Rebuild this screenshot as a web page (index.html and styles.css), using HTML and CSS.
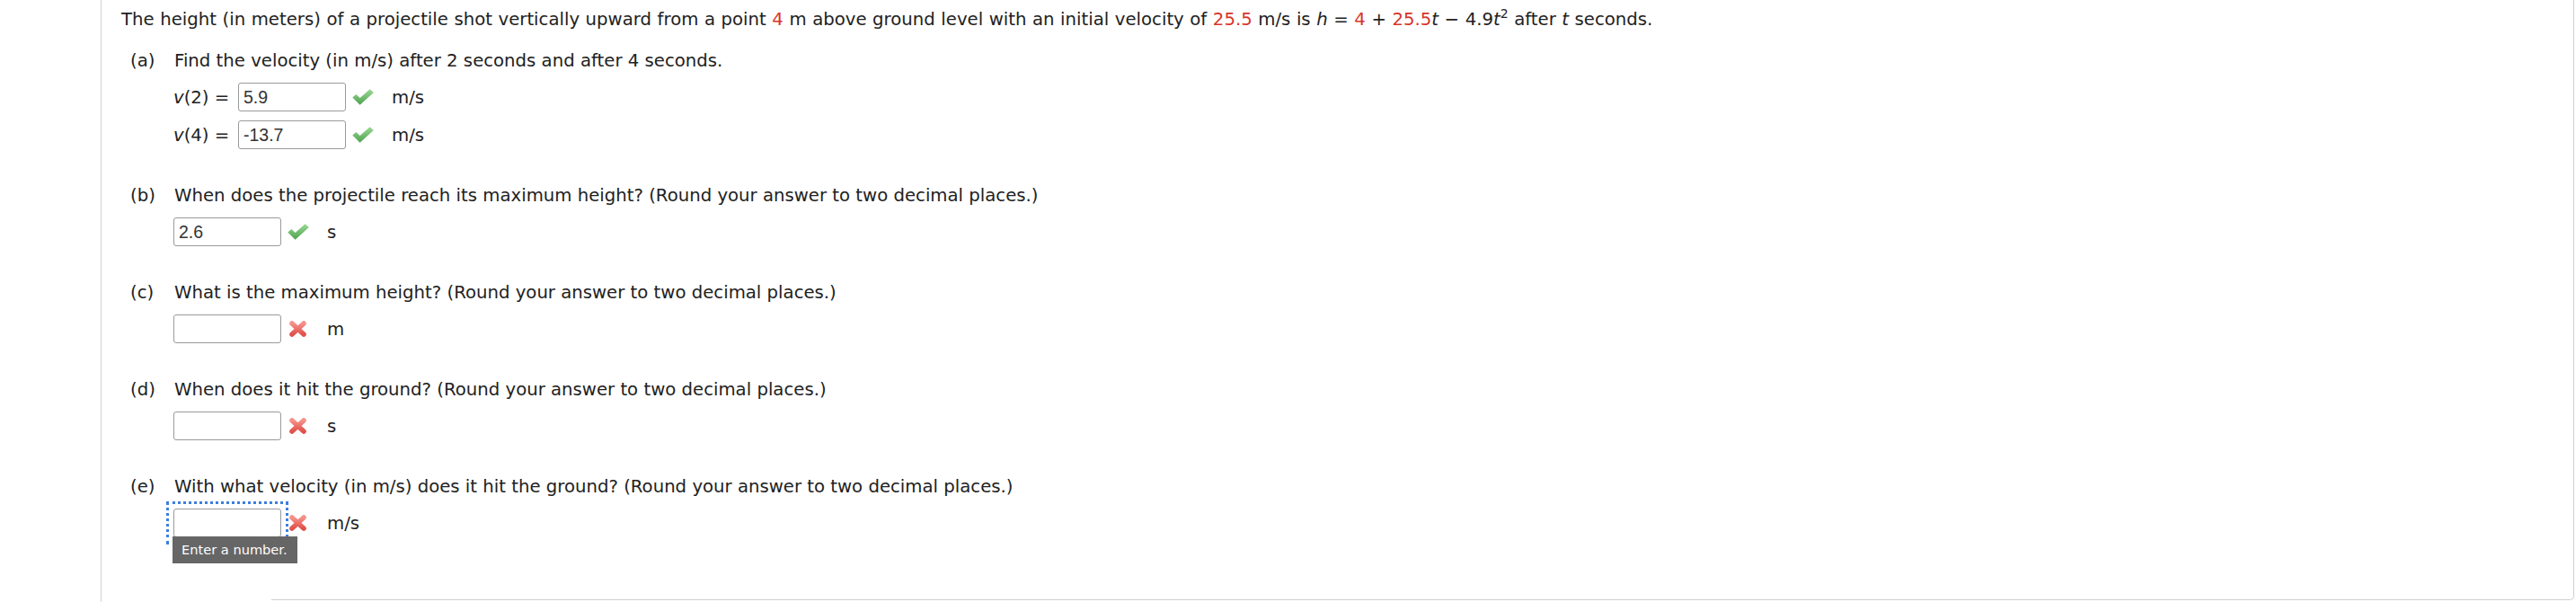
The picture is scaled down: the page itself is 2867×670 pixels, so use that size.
FILE: index.html
```html
<!DOCTYPE html>
<html lang="en">
<head>
<meta charset="utf-8">
<title>Projectile question</title>
<link rel="stylesheet" href="styles.css">
</head>
<body>
<div class="page">
  <div class="gutter"></div>
  <div class="panel">
    <p class="stem">The height (in meters) of a projectile shot vertically upward from a point <span class="num">4</span> m above ground level with an initial velocity of <span class="num">25.5</span> m/s is <i>h</i> = <span class="num">4</span> + <span class="num">25.5</span><i>t</i> &minus; 4.9<i>t</i><sup>2</sup> after <i>t</i> seconds.</p>

    <section class="part">
      <div class="title"><span class="letter">(a)</span><span>Find the velocity (in m/s) after 2 seconds and after 4 seconds.</span></div>
      <div class="row">
        <span class="label"><i>v</i>(2) =</span>
        <input class="ans" type="text" value="5.9">
        <span class="mark"><svg viewBox="0 0 24 18" width="24" height="18"><defs><linearGradient id="g1" x1="0" y1="0" x2="0" y2="1"><stop offset="0" stop-color="#9bd896"/><stop offset="1" stop-color="#4da34f"/></linearGradient></defs><path d="M0.3 9.6 L4.4 5.9 L8.6 9.9 L19.6 0.2 L23.8 4 L8.6 17.8 Z" fill="url(#g1)"/></svg></span>
        <span class="unit">m/s</span>
      </div>
      <div class="row">
        <span class="label"><i>v</i>(4) =</span>
        <input class="ans" type="text" value="-13.7">
        <span class="mark"><svg viewBox="0 0 24 18" width="24" height="18"><defs><linearGradient id="g2" x1="0" y1="0" x2="0" y2="1"><stop offset="0" stop-color="#9bd896"/><stop offset="1" stop-color="#4da34f"/></linearGradient></defs><path d="M0.3 9.6 L4.4 5.9 L8.6 9.9 L19.6 0.2 L23.8 4 L8.6 17.8 Z" fill="url(#g2)"/></svg></span>
        <span class="unit">m/s</span>
      </div>
    </section>

    <section class="part">
      <div class="title"><span class="letter">(b)</span><span>When does the projectile reach its maximum height? (Round your answer to two decimal places.)</span></div>
      <div class="row">
        <input class="ans" type="text" value="2.6">
        <span class="mark"><svg viewBox="0 0 24 18" width="24" height="18"><defs><linearGradient id="g3" x1="0" y1="0" x2="0" y2="1"><stop offset="0" stop-color="#9bd896"/><stop offset="1" stop-color="#4da34f"/></linearGradient></defs><path d="M0.3 9.6 L4.4 5.9 L8.6 9.9 L19.6 0.2 L23.8 4 L8.6 17.8 Z" fill="url(#g3)"/></svg></span>
        <span class="unit">s</span>
      </div>
    </section>

    <section class="part">
      <div class="title"><span class="letter">(c)</span><span>What is the maximum height? (Round your answer to two decimal places.)</span></div>
      <div class="row">
        <input class="ans" type="text" value="">
        <span class="mark"><svg viewBox="0 0 22 20" width="22" height="20"><defs><linearGradient id="r1" x1="0" y1="0" x2="0" y2="1"><stop offset="0" stop-color="#f5928b"/><stop offset="1" stop-color="#e0514b"/></linearGradient></defs><path d="M4 4 L17 16 M17 4 L4 16" stroke="url(#r1)" stroke-width="5.6" stroke-linecap="round" fill="none"/></svg></span>
        <span class="unit">m</span>
      </div>
    </section>

    <section class="part">
      <div class="title"><span class="letter">(d)</span><span>When does it hit the ground? (Round your answer to two decimal places.)</span></div>
      <div class="row">
        <input class="ans" type="text" value="">
        <span class="mark"><svg viewBox="0 0 22 20" width="22" height="20"><defs><linearGradient id="r2" x1="0" y1="0" x2="0" y2="1"><stop offset="0" stop-color="#f5928b"/><stop offset="1" stop-color="#e0514b"/></linearGradient></defs><path d="M4 4 L17 16 M17 4 L4 16" stroke="url(#r2)" stroke-width="5.6" stroke-linecap="round" fill="none"/></svg></span>
        <span class="unit">s</span>
      </div>
    </section>

    <section class="part">
      <div class="title"><span class="letter">(e)</span><span>With what velocity (in m/s) does it hit the ground? (Round your answer to two decimal places.)</span></div>
      <div class="row">
        <span class="focus">
          <input class="ans" type="text" value="">
          <span class="tip">Enter a number.</span>
        </span>
        <span class="mark"><svg viewBox="0 0 22 20" width="22" height="20"><defs><linearGradient id="r3" x1="0" y1="0" x2="0" y2="1"><stop offset="0" stop-color="#f5928b"/><stop offset="1" stop-color="#e0514b"/></linearGradient></defs><path d="M4 4 L17 16 M17 4 L4 16" stroke="url(#r3)" stroke-width="5.6" stroke-linecap="round" fill="none"/></svg></span>
        <span class="unit">m/s</span>
      </div>
    </section>
  </div>
</div>
</body>
</html>
```

FILE: styles.css
```css
html, body {
  margin: 0;
  padding: 0;
  background: #ffffff;
}

body {
  font-family: "DejaVu Sans", Verdana, sans-serif;
  font-size: 19.7px;
  color: #222222;
}

.page {
  display: flex;
  height: 670px;
  overflow: hidden;
}

.gutter {
  width: 112px;
  flex: none;
}

.panel {
  flex: 1;
  position: relative;
  border-left: 1px solid #d2d2d2;
  padding: 10px 0 0 22px;
}

.panel::after {
  content: "";
  position: absolute;
  left: 189px;
  right: 2px;
  top: 0;
  bottom: 2px;
  border-right: 1px solid #cfcfcf;
  border-bottom: 1px solid #cfcfcf;
  border-bottom-right-radius: 5px;
  pointer-events: none;
}

.stem {
  margin: 0;
  line-height: 24px;
  white-space: nowrap;
  word-spacing: 0.3px;
}

.num {
  color: #d7352b;
}

sup {
  font-size: 14px;
  line-height: 0;
  vertical-align: 8px;
}

.part {
  margin: 22px 0 0 10px;
}

.part + .part {
  margin-top: 40px;
}

.title {
  display: flex;
  line-height: 24px;
  white-space: nowrap;
}

.letter {
  width: 49px;
  flex: none;
}

.row {
  display: flex;
  align-items: center;
  height: 32px;
  margin: 12px 0 0 48px;
}

.row + .row {
  margin-top: 10px;
}

.label {
  width: 72px;
  flex: none;
  white-space: nowrap;
}

.ans {
  box-sizing: border-box;
  width: 120px;
  height: 32px;
  margin: 0;
  padding: 0 5px;
  border: 1px solid #9a9a9a;
  border-radius: 3px;
  background: #ffffff;
  font-family: "Liberation Sans", Arial, sans-serif;
  font-size: 19.5px;
  color: #333333;
  outline: none;
}

.focus {
  position: relative;
  display: inline-flex;
  outline: 3px dotted #3d7fdb;
  outline-offset: 5px;
}

.tip {
  position: absolute;
  left: -1px;
  top: calc(100% - 1px);
  width: 139px;
  height: 30px;
  box-sizing: border-box;
  padding-left: 10px;
  background: #666666;
  color: #ffffff;
  font-size: 14.6px;
  line-height: 30px;
  white-space: nowrap;
}

.mark {
  display: flex;
  align-items: center;
  justify-content: center;
  width: 24px;
  margin-left: 7px;
  flex: none;
}

.mark svg {
  display: block;
}

.unit {
  margin-left: 20px;
}
```
